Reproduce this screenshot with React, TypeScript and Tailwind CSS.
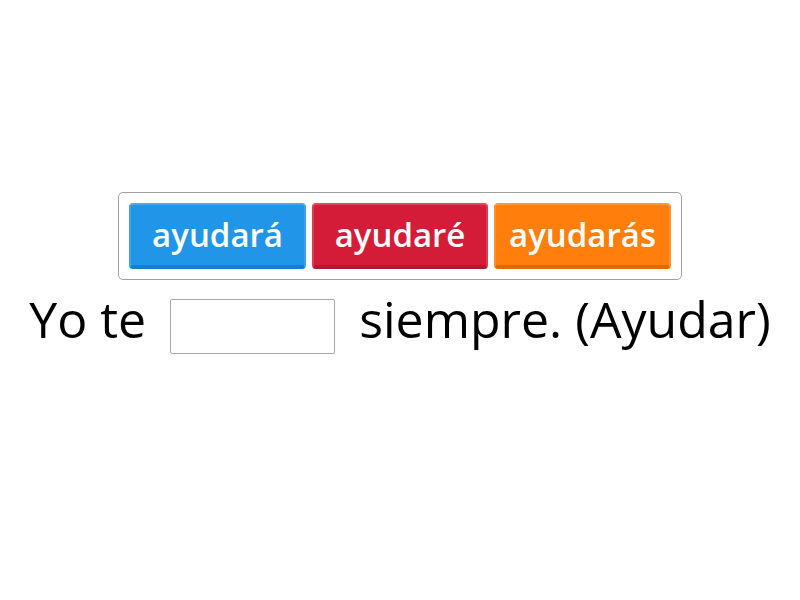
export default function App() {
  const font = { fontFamily: '"Open Sans", "Noto Sans", sans-serif' };
  return (
    <div className="w-[800px] h-[600px] bg-white flex flex-col items-center pt-[192px]" style={font}>
      <div className="border border-[#a0a0a0] rounded-[5px] p-[10px] flex gap-[6px]">
        <div className="w-[177px] h-[66px] rounded-[4px] bg-[#2196e8] border-t-2 border-x-2 border-b-4 border-t-[#4aa8ef] border-x-[#3ea2ec] border-b-[#1a7fcb] flex items-center justify-center text-white text-[33px] font-semibold leading-none pb-[2px]">
          ayudará
        </div>
        <div className="w-[176px] h-[66px] rounded-[4px] bg-[#d41c38] border-t-2 border-x-2 border-b-4 border-t-[#e0475c] border-x-[#dc3a51] border-b-[#b3172f] flex items-center justify-center text-white text-[33px] font-semibold leading-none pb-[2px]">
          ayudaré
        </div>
        <div className="w-[177px] h-[66px] rounded-[4px] bg-[#ff7e0c] border-t-2 border-x-2 border-b-4 border-t-[#ff993c] border-x-[#ff9131] border-b-[#e06900] flex items-center justify-center text-white text-[33px] font-semibold leading-none pb-[2px]">
          ayudarás
        </div>
      </div>
      <div className="mt-[19px] flex items-center h-[54px] text-black text-[50px] gap-[24px]">
        <span className="mb-[14px]">Yo te</span>
        <div className="w-[165px] h-[55px] border border-[#a8a8a8] rounded-[2px]"></div>
        <span className="mb-[14px]">siempre. (Ayudar)</span>
      </div>
    </div>
  );
}
